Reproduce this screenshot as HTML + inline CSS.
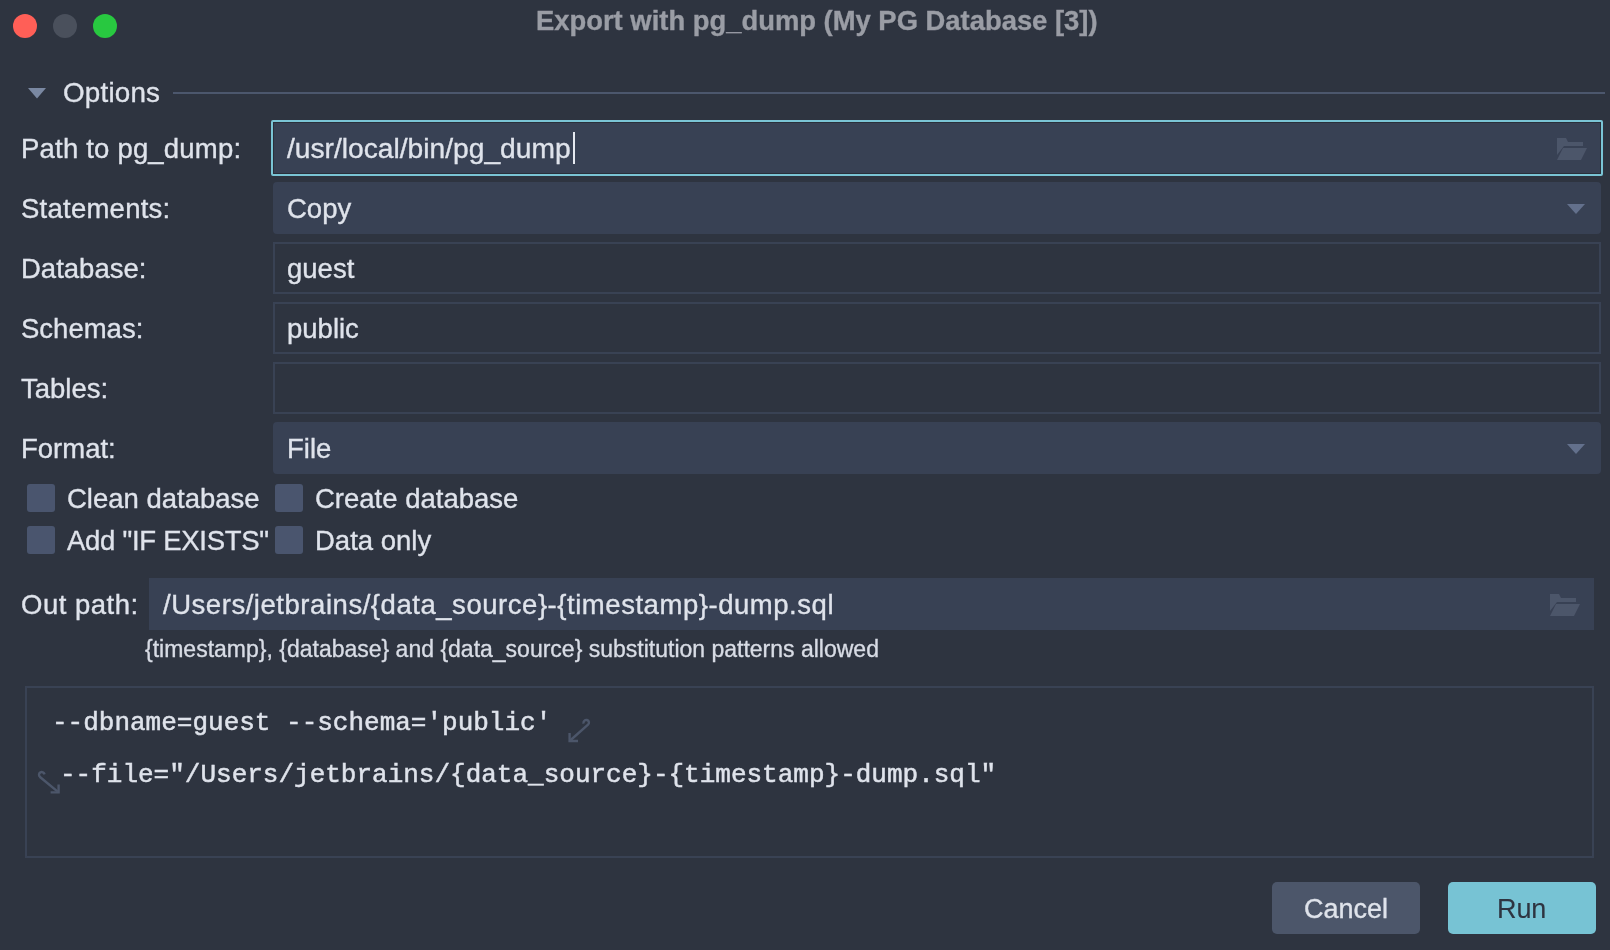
<!DOCTYPE html>
<html>
<head>
<meta charset="utf-8">
<style>
html,body{margin:0;padding:0;}
body{width:1610px;height:950px;background:#2E3440;position:relative;overflow:hidden;font-family:"Liberation Sans",sans-serif;color:#DFE3EB;}
.a{position:absolute;}
.t{position:absolute;white-space:pre;line-height:1em;font-size:27.5px;will-change:transform;-webkit-text-stroke:0.35px currentColor;}
.dot{position:absolute;width:24px;height:24px;border-radius:50%;top:14px;}
.fld{position:absolute;box-sizing:border-box;}
.tf{border:2px solid #394254;background:#2E3440;}
.cb{background:#384154;border-radius:4px;}
.chk{position:absolute;width:28px;height:28px;background:#4A556E;border-radius:3px;}
.mono{will-change:transform;-webkit-text-stroke:0.5px currentColor;position:absolute;white-space:pre;line-height:1em;font-family:"Liberation Mono",monospace;font-size:26px;}
</style>
</head>
<body>
<!-- traffic lights -->
<div class="dot" style="left:13px;background:#FF5F57"></div>
<div class="dot" style="left:53px;background:#4A505C"></div>
<div class="dot" style="left:93px;background:#28C840"></div>
<div class="t" style="left:536px;top:7px;font-size:27.4px;font-weight:bold;color:#9A9DA5">Export with pg_dump (My PG Database [3])</div>

<!-- Options header -->
<svg class="a" style="left:28px;top:88px" width="18" height="11" viewBox="0 0 18 11"><path d="M0 0H18L9 10.6Z" fill="#7A88A2"/></svg>
<div class="t" style="left:63px;top:79px;font-size:27.8px;letter-spacing:0.2px">Options</div>
<div class="a" style="left:173px;top:92px;width:1432px;height:2px;background:#4C576D"></div>

<!-- labels -->
<div class="t" style="left:21px;top:135px;letter-spacing:0.2px">Path to pg_dump:</div>
<div class="t" style="left:21px;top:195px;letter-spacing:0.25px">Statements:</div>
<div class="t" style="left:21px;top:255px">Database:</div>
<div class="t" style="left:21px;top:315px">Schemas:</div>
<div class="t" style="left:21px;top:375px">Tables:</div>
<div class="t" style="left:21px;top:435px">Format:</div>

<!-- path field (focused) -->
<div class="fld" style="left:271px;top:120px;width:1332px;height:56px;border:2.4px solid #7AC4D5;border-radius:2px;background:#384154;box-shadow:inset 0 0 0 1px #2A2F3A"></div>
<div class="t" style="left:287px;top:133.8px;font-size:28.2px">/usr/local/bin/pg_dump</div>
<div class="a" style="left:573px;top:132px;width:2px;height:32px;background:#E5E9F0"></div>
<svg class="a" style="left:1557px;top:138px" width="30" height="22" viewBox="0 0 30 22"><path d="M0 0H9L11 4H26V8H7L0 17Z" fill="#4C566A"/><path d="M6 10H30L24 22H0Z" fill="#4C566A"/></svg>

<!-- statements combo -->
<div class="fld cb" style="left:273px;top:182px;width:1328px;height:52px"></div>
<div class="t" style="left:287px;top:195px">Copy</div>
<svg class="a" style="left:1567px;top:204px" width="18" height="10" viewBox="0 0 18 10"><path d="M0 0H18L9 10Z" fill="#63708C"/></svg>

<!-- database -->
<div class="fld tf" style="left:273px;top:242px;width:1328px;height:52px"></div>
<div class="t" style="left:287px;top:255px">guest</div>
<!-- schemas -->
<div class="fld tf" style="left:273px;top:302px;width:1328px;height:52px"></div>
<div class="t" style="left:287px;top:315px">public</div>
<!-- tables -->
<div class="fld tf" style="left:273px;top:362px;width:1328px;height:52px"></div>

<!-- format combo -->
<div class="fld cb" style="left:273px;top:422px;width:1328px;height:52px"></div>
<div class="t" style="left:287px;top:435px">File</div>
<svg class="a" style="left:1567px;top:444px" width="18" height="10" viewBox="0 0 18 10"><path d="M0 0H18L9 10Z" fill="#63708C"/></svg>

<!-- checkboxes -->
<div class="chk" style="left:27px;top:484px"></div>
<div class="t" style="left:67px;top:485px">Clean database</div>
<div class="chk" style="left:275px;top:484px"></div>
<div class="t" style="left:315px;top:485px">Create database</div>
<div class="chk" style="left:27px;top:526px"></div>
<div class="t" style="left:67px;top:527px;letter-spacing:-0.28px">Add "IF EXISTS"</div>
<div class="chk" style="left:275px;top:526px"></div>
<div class="t" style="left:315px;top:527px">Data only</div>

<!-- out path -->
<div class="t" style="left:21px;top:591px;letter-spacing:0.5px">Out path:</div>
<div class="fld" style="left:149px;top:578px;width:1445px;height:52px;background:#384154"></div>
<div class="t" style="left:163px;top:591px;letter-spacing:0.54px">/Users/jetbrains/{data_source}-{timestamp}-dump.sql</div>
<svg class="a" style="left:1550px;top:594px" width="30" height="22" viewBox="0 0 30 22"><path d="M0 0H9L11 4H26V8H7L0 17Z" fill="#4C566A"/><path d="M6 10H30L24 22H0Z" fill="#4C566A"/></svg>
<div class="t" style="left:145px;top:637.5px;font-size:23px;color:#D8DCE5">{timestamp}, {database} and {data_source} substitution patterns allowed</div>

<!-- command area -->
<div class="fld" style="left:25px;top:686px;width:1569px;height:172px;border:2px solid #394254"></div>
<div class="mono" style="left:52px;top:710px">--dbname=guest --schema='public'</div>

<div class="mono" style="left:60px;top:762px">--file="/Users/jetbrains/{data_source}-{timestamp}-dump.sql"</div>


<svg class="a" style="left:0;top:0" width="1610" height="950" viewBox="0 0 1610 950">
<g fill="none" stroke="#4C566A" stroke-width="2.4" stroke-linecap="butt" stroke-linejoin="miter">
<path d="M583.6 723.6C583 721.2 585 719.6 587 720C589.2 720.6 589.6 723 588 724.6L569.6 741"/>
<path d="M569.6 733V741H578"/>
<path d="M44.6 774.4C44 772.4 42 771.6 40.4 772.4C38.6 773.4 38.6 775.6 40 777L58.6 792.4"/>
<path d="M58.6 784.6V792.4H50.6"/>
</g></svg>
<!-- buttons -->
<div class="fld" style="left:1272px;top:882px;width:148px;height:52px;background:#4C566A;border-radius:5px"></div>
<div class="t" style="left:1304px;top:896px;font-size:27px">Cancel</div>
<div class="fld" style="left:1448px;top:882px;width:148px;height:52px;background:#77C3D4;border-radius:5px"></div>
<div class="t" style="left:1497px;top:896px;font-size:27px;color:#2E3440;-webkit-text-stroke:0.1px #2E3440;letter-spacing:-0.1px">Run</div>
</body>
</html>
